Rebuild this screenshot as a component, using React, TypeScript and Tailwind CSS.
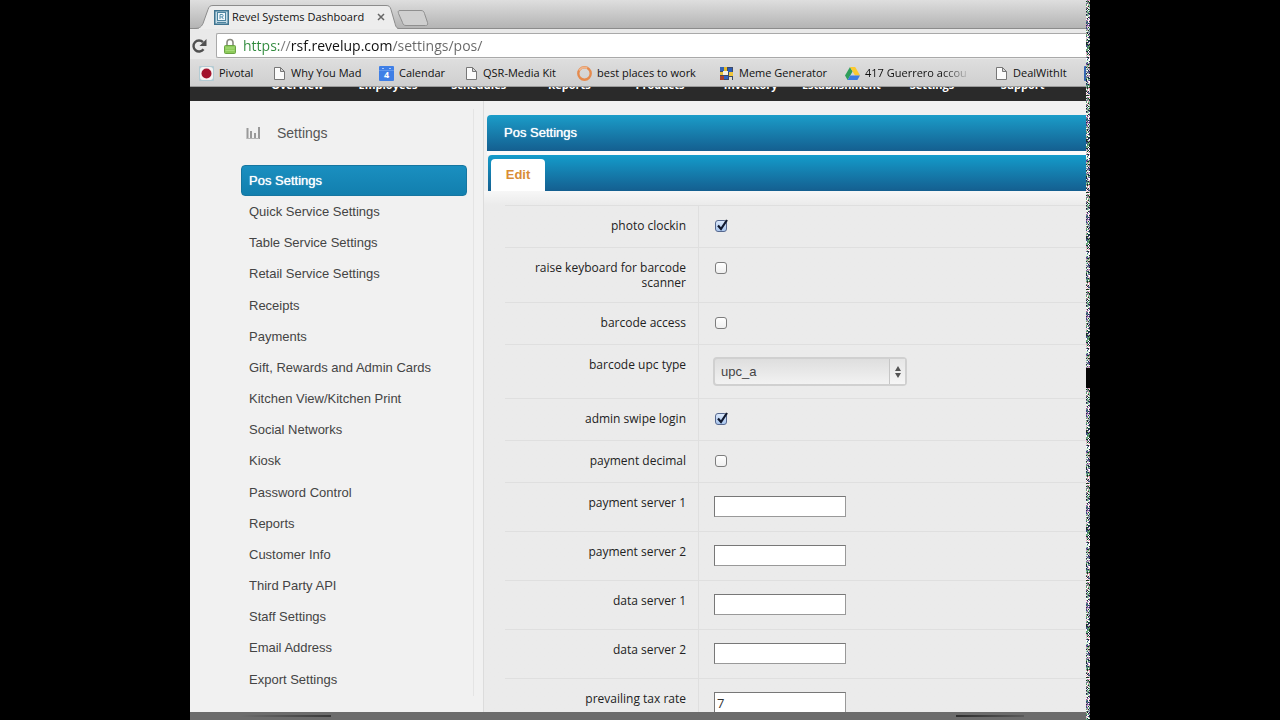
import React from 'react';
import clsx from 'clsx';

type IconName = 'pivotal' | 'page' | 'calendar' | 'ring' | 'meme' | 'drive' | 'blue';

interface Bookmark {
  label: string;
  icon: IconName;
  width: string;
  faded?: boolean;
}

interface Field {
  id: string;
  label: string;
  type: 'checkbox' | 'select' | 'text';
  checked?: boolean;
  value?: string;
}

const bookmarks: Bookmark[] = [
  { label: 'Pivotal', icon: 'pivotal', width: 'w-[75px]' },
  { label: 'Why You Mad', icon: 'page', width: 'w-[105px]' },
  { label: 'Calendar', icon: 'calendar', width: 'w-[87px]' },
  { label: 'QSR-Media Kit', icon: 'page', width: 'w-[111px]' },
  { label: 'best places to work', icon: 'ring', width: 'w-[142px]' },
  { label: 'Meme Generator', icon: 'meme', width: 'w-[126px]' },
  { label: '417 Guerrero accou', icon: 'drive', width: 'w-[151px]', faded: true },
  { label: 'DealWithIt', icon: 'page', width: 'w-[88px]' },
  { label: '', icon: 'blue', width: 'w-[15px]' },
];

const navItems = [
  'Overview',
  'Employees',
  'Schedules',
  'Reports',
  'Products',
  'Inventory',
  'Establishment',
  'Settings',
  'Support',
];

const menuItems = [
  'Pos Settings',
  'Quick Service Settings',
  'Table Service Settings',
  'Retail Service Settings',
  'Receipts',
  'Payments',
  'Gift, Rewards and Admin Cards',
  'Kitchen View/Kitchen Print',
  'Social Networks',
  'Kiosk',
  'Password Control',
  'Reports',
  'Customer Info',
  'Third Party API',
  'Staff Settings',
  'Email Address',
  'Export Settings',
];

const fields: Field[] = [
  { id: 'photo-clockin', label: 'photo clockin', type: 'checkbox', checked: true },
  { id: 'raise-keyboard', label: 'raise keyboard for barcode scanner', type: 'checkbox' },
  { id: 'barcode-access', label: 'barcode access', type: 'checkbox' },
  { id: 'barcode-upc-type', label: 'barcode upc type', type: 'select', value: 'upc_a' },
  { id: 'admin-swipe-login', label: 'admin swipe login', type: 'checkbox', checked: true },
  { id: 'payment-decimal', label: 'payment decimal', type: 'checkbox' },
  { id: 'payment-server-1', label: 'payment server 1', type: 'text' },
  { id: 'payment-server-2', label: 'payment server 2', type: 'text' },
  { id: 'data-server-1', label: 'data server 1', type: 'text' },
  { id: 'data-server-2', label: 'data server 2', type: 'text' },
  { id: 'prevailing-tax-rate', label: 'prevailing tax rate', type: 'text', value: '7' },
];

const PageIcon: React.FC = () => (
  <svg className="h-[15px] w-3 shrink-0" viewBox="0 0 12 15" aria-hidden="true">
    <path d="M.5 1.500h6l4 4v8H.5zM6.500 1.500v4h4" fill="#fbfbfb" stroke="#777" />
  </svg>
);

const BookmarkIcon: React.FC<{ name: IconName }> = ({ name }) => {
  if (name === 'page') {
    return <PageIcon />;
  }

  return (
    <svg className="h-[15px] w-[15px] shrink-0" viewBox="0 0 15 15" aria-hidden="true">
      {name === 'pivotal' && (
        <>
          <rect width="15" height="15" rx="1" fill="#b3cbd3" />
          <rect x="1" y="1" width="13" height="13" rx="3" fill="#f6f3f2" />
          <circle cx="7.5" cy="7.5" r="5" fill="#a3122c" />
        </>
      )}
      {name === 'calendar' && (
        <>
          <rect width="15" height="15" rx="1" fill="#3f7fe6" />
          <path d="M3 2.5h2M10 2.5h2" stroke="#a9c8fa" />
          <path d="M0 4.5h15" stroke="#5f97ee" />
          <text x="7.5" y="12" textAnchor="middle" fontSize="9" fontWeight="700" fill="#fff">
            4
          </text>
        </>
      )}
      {name === 'ring' && (
        <>
          <circle cx="7.5" cy="7.5" r="6.2" fill="none" stroke="#e58a4d" strokeWidth="2.4" />
          <path d="M2.2 4.5a6.2 6.2 0 0 1 8-2.5" fill="none" stroke="#efb58c" strokeWidth="2" />
        </>
      )}
      {name === 'meme' && (
        <>
          <rect x="1" y="1" width="13" height="13" fill="#3d4a68" />
          <path d="M1 1h4v4H1z" fill="#3564b4" />
          <path d="M5 1h3v4H5z" fill="#e7bb2b" />
          <path d="M9 2h4v4H9z" fill="#2a5bb8" />
          <path d="M1 6h3v3H1z" fill="#e9c23c" />
          <path d="M4 5h5v4H4z" fill="#f3f0e4" />
          <path d="M10 6h4v4h-4z" fill="#efc63a" />
          <path d="M1 10h4v4H1z" fill="#a8402f" />
          <path d="M5 10h4v3H5z" fill="#2e62c4" />
          <path d="M10 11h3v3h-3z" fill="#e3e0d0" />
        </>
      )}
      {name === 'drive' && (
        <>
          <path d="M5 1 0 9.6 2.6 14 7.6 5.4z" fill="#2f9e5b" />
          <path d="M5 1h5.2l5 8.6H10z" fill="#fbc92f" />
          <path d="M5.2 9.6H15L12.4 14H2.6z" fill="#3b7be0" />
        </>
      )}
      {name === 'blue' && <rect width="15" height="15" rx="1" fill="#3566b0" />}
    </svg>
  );
};

const BrowserTabs: React.FC = () => (
  <div className="flex h-[29px] items-end border-b border-[#8c8c8c] bg-linear-to-b from-[#dedede] to-[#b4b4b4] pl-1">
    <div className="relative -mb-px h-6 w-[206px] shrink-0">
      <svg className="absolute inset-0 h-full w-full" viewBox="0 0 206 24" aria-hidden="true">
        <path
          d="M0 23.500c5 0 7-1 9-5l5-14c1-3 2-4 5-4h173c3 0 4 1 5 4l4 14c1 4 2 5 5 5"
          fill="#ededed"
          stroke="#8c8c8c"
        />
        <path d="M5 23.500h198" stroke="#ededed" />
      </svg>
      <div className="relative flex h-full items-center pl-5">
        <svg className="h-[15px] w-[15px] shrink-0" viewBox="0 0 15 15" aria-hidden="true">
          <rect width="15" height="15" fill="#3f7490" />
          <rect x="1.500" y="1.500" width="12" height="12" fill="#c4dbe6" />
          <rect x="3.500" y="2.500" width="8" height="8" fill="#f1f8fb" stroke="#4d84a0" />
          <path d="M6 9V4.500h2a1.200 1.200 0 0 1 0 2.400H6M8 7l1.300 2" fill="none" stroke="#5b93b0" />
          <path d="M3 12.500h9" stroke="#4d84a0" />
        </svg>
        <span className="ml-[3px] w-[141px] whitespace-nowrap text-[11px] text-[#111]">
          Revel Systems Dashboard
        </span>
        <button type="button" aria-label="Close tab" className="flex h-4 w-4 items-center justify-center">
          <svg className="h-2 w-2" viewBox="0 0 8 8" aria-hidden="true">
            <path d="M1 1l6 6M7 1L1 7" stroke="#666" strokeWidth="1.500" />
          </svg>
        </button>
      </div>
    </div>
    <button type="button" aria-label="New tab" className="mb-[2px] -ml-[3px] h-4 w-8 shrink-0">
      <svg className="h-full w-full" viewBox="0 0 32 16" aria-hidden="true">
        <path
          d="M3 .5h21c2 0 3 1 3.500 3l3 9c.5 2 0 3-2 3H9c-2 0-3-1-3.500-3l-4-9C1 1.500 1 .5 3 .5z"
          fill="#cfcfcf"
          stroke="#8f8f8f"
        />
      </svg>
    </button>
  </div>
);

const AddressBar: React.FC = () => (
  <div className="flex h-[30px] items-end bg-[#e9e9e9] pb-px">
    <button type="button" aria-label="Reload" className="flex h-6 w-[18px] shrink-0 items-center justify-center">
      <svg className="h-4 w-4" viewBox="0 0 16 16" aria-hidden="true">
        <path d="M12.500 11.200A5.500 5.500 0 1 1 12 4.200" fill="none" stroke="#505050" strokeWidth="2.400" />
        <path d="M15.500 1v7H8.500z" fill="#505050" />
      </svg>
    </button>
    <div className="ml-2 flex h-[25px] min-w-0 flex-1 items-center rounded-l-[2px] border border-r-0 border-[#a9a9a9] bg-white pl-[7px]">
      <svg className="h-4 w-3 shrink-0" viewBox="0 0 12 16" aria-hidden="true">
        <path d="M3 8V4.500a3 3 0 0 1 6 0V8" fill="none" stroke="#8a8a80" strokeWidth="1.600" />
        <rect x=".5" y="7.500" width="11" height="8" rx="1" fill="#8ecb5c" stroke="#6ba344" />
        <path d="M1.500 10h9M1.500 12.500h9" stroke="#a8dc7c" />
      </svg>
      {/* scheme, host and path are tinted by the stops of one gradient */}
      <input
        type="text"
        aria-label="Address"
        defaultValue="https://rsf.revelup.com/settings/pos/"
        className="ml-[7px] h-full min-w-0 flex-1 bg-[linear-gradient(90deg,#2f8a3c_0_36px,#777_36px_48px,#111_48px_149px,#666_149px)] bg-clip-text text-[14px] text-transparent outline-none"
      />
    </div>
  </div>
);

const BookmarksBar: React.FC = () => (
  <nav
    aria-label="Bookmarks"
    className="flex h-[28px] items-center overflow-hidden border-b border-[#9a9a9a] bg-linear-to-b from-[#dedede] to-[#cfcfcf] pt-px pl-[9px]"
  >
    {bookmarks.map(({ label, icon, width, faded }) => (
      <a
        key={icon + label}
        href="#"
        aria-label={label || 'Bookmark'}
        className={clsx('flex shrink-0 items-center gap-[5px]', width)}
      >
        <BookmarkIcon name={icon} />
        <span
          className={clsx(
            'whitespace-nowrap text-[11px]',
            faded
              ? 'bg-linear-to-r from-[#111] from-75% to-[#bbb] bg-clip-text text-transparent'
              : 'text-[#111]',
          )}
        >
          {label}
        </span>
      </a>
    ))}
  </nav>
);

const SiteNav: React.FC = () => (
  <nav aria-label="Main" className="h-[14px] shrink-0 overflow-hidden bg-[#2a2a2a] pr-[18px] pl-[62px]">
    {/* page is scrolled, only the bottom of the links shows */}
    <ul className="-mt-[10px] grid grid-cols-9">
      {navItems.map((item) => (
        <li key={item} className="text-center">
          <a href="#" className="block text-[11px] leading-4 font-bold text-white">
            {item}
          </a>
        </li>
      ))}
    </ul>
  </nav>
);

const Sidebar: React.FC = () => (
  <aside className="w-[294px] shrink-0 border-r border-[#dcdcdc] pt-2 font-['Liberation_Sans',Arial,sans-serif]">
    <div className="mr-[9px] h-[587px] border-r border-[#e4e4e4] pr-[6px] pl-[51px]">
      <h2 className="flex h-[48px] items-center gap-[17px] pl-[5px] text-[14px] text-[#555]">
        <svg className="h-3 w-[14px]" viewBox="0 0 14 12" aria-hidden="true">
          <path d="M1.500 1v11M5 4v8M9 6v6M13 0v12" stroke="#999" strokeWidth="2" />
          <path d="M1 11.500h12" stroke="#b5b5b5" />
        </svg>
        Settings
      </h2>
      <ul className="mt-2 grid h-[530px] auto-rows-fr">
        {menuItems.map((item, index) => (
          <li key={item}>
            <a
              href="#"
              className={clsx(
                'flex h-full items-center rounded-[4px] border pl-[7px] text-[13px]',
                index === 0
                  ? 'border-[#1676a0] bg-linear-to-b from-[#1a8fc0] to-[#127fae] text-white text-shadow-[0_0_1px_#fff]'
                  : 'border-transparent text-[#444]',
              )}
            >
              {item}
            </a>
          </li>
        ))}
      </ul>
    </div>
  </aside>
);

const FieldControl: React.FC<{ field: Field }> = ({ field }) => {
  if (field.type === 'checkbox') {
    return (
      <span className="relative ml-px flex h-[17px] w-4 items-start pt-[2px]">
        <input
          id={field.id}
          type="checkbox"
          defaultChecked={field.checked}
          className="peer ml-px h-3 w-3 appearance-none rounded-[3px] border border-[#7d7d7d] bg-linear-to-b from-white to-[#efefef] checked:border-[#56688f] checked:from-[#dbe8fa] checked:to-[#a9c6ee]"
        />
        <svg
          className="pointer-events-none absolute inset-0 hidden h-4 w-4 peer-checked:block"
          viewBox="0 0 16 16"
          aria-hidden="true"
        >
          <path d="M4 7.500l3 3.500 6-9" fill="none" stroke="#10182e" strokeWidth="2.200" />
        </svg>
      </span>
    );
  }

  if (field.type === 'select') {
    return (
      <span className="relative block h-[29px] w-[194px]">
        <select
          id={field.id}
          defaultValue={field.value}
          className="h-full w-full appearance-none rounded-[4px] border-2 border-[#d0d0d0] bg-linear-to-b from-[#dedede] to-[#f2f2f2] pl-[6px] font-['Liberation_Sans',Arial,sans-serif] text-[13px] text-[#444]"
        >
          <option value="upc_a">upc_a</option>
        </select>
        <span className="pointer-events-none absolute inset-y-[2px] right-[2px] flex w-4 items-center justify-center border-l border-[#c6c6c6] bg-linear-to-b from-[#e6e6e6] to-[#f6f6f6]">
          <svg className="h-3 w-[6px]" viewBox="0 0 6 12" aria-hidden="true">
            <path d="M3 0l3 5H0zM3 12l3-5H0z" fill="#555" />
          </svg>
        </span>
      </span>
    );
  }

  return (
    <span className="flex h-6 items-start pt-px">
      <input
        id={field.id}
        type="text"
        defaultValue={field.value}
        className="ml-px h-[21px] w-[132px] border border-[#999] border-t-[#777] border-l-[#777] bg-white px-[2px] text-[13px] text-[#333] outline-none"
      />
    </span>
  );
};

const SettingsPanel: React.FC = () => (
  <main className="min-w-0 flex-1 bg-[#ebebeb]">
    <div className="bg-[#f1f1f1] pt-[14px] pl-[3px] font-['Liberation_Sans',Arial,sans-serif]">
      <h1 className="flex h-9 items-center rounded-tl-[4px] bg-linear-to-b from-[#1b9dc9] to-[#145f90] pl-[17px] text-[13px] text-white text-shadow-[0_0_1px_#fff]">
        Pos Settings
      </h1>
      <div className="h-1 bg-[#fafafa]" />
      <div
        role="tablist"
        className="ml-px flex h-9 items-end rounded-tl-[4px] bg-linear-to-b from-[#139ccb] to-[#145f90] pl-[3px]"
      >
        <button
          type="button"
          role="tab"
          aria-selected="true"
          className="h-8 w-[54px] rounded-t-[4px] bg-white text-[13px] font-bold text-[#d98c35]"
        >
          Edit
        </button>
      </div>
    </div>
    <form className="bg-linear-to-b from-[#f7f7f7] to-[#ebebeb] to-[14px] pt-[14px] pl-[21px]">
      <div className="border-t border-[#dfdfdf]">
        {fields.map((field) => (
          <div key={field.id} className="flex border-b border-[#dfdfdf]">
            <label
              htmlFor={field.id}
              className="w-[194px] shrink-0 border-r border-[#dfdfdf] py-3 pr-3 pl-5 text-right text-[12px] leading-[15px] text-[#222]"
            >
              {field.label}
            </label>
            <div className="py-3 pl-[14px]">
              <FieldControl field={field} />
            </div>
          </div>
        ))}
      </div>
    </form>
  </main>
);

const noiseColors = ['#1b2f1c', '#d8f0dc', '#5f9f70', '#8a5fa6', '#e0a0b8', '#3a4a80', '#90c9a5', '#ffffff', '#1c2a42'];

// small LCG, the same grain comes out on every render
const noiseCells = Array.from({ length: 388 }).reduce<number[]>((cells) => {
  const last = cells.length ? cells[cells.length - 1] : 17;
  return [...cells, (last * 1103 + 12345) % 65537];
}, []);

// noise along the right edge of the recording
const NoiseStrip: React.FC = () => (
  <svg className="h-full w-1 shrink-0" aria-hidden="true">
    <defs>
      <pattern id="noise" width="4" height="97" patternUnits="userSpaceOnUse">
        {noiseCells.map((cell, i) => (
          <rect
            key={i}
            x={i % 4}
            y={Math.floor(i / 4)}
            width="1"
            height="1"
            fill={noiseColors[cell % noiseColors.length]}
          />
        ))}
      </pattern>
    </defs>
    <rect width="4" height="100%" fill="url(#noise)" />
    <rect y="368" width="4" height="20" fill="#050505" />
  </svg>
);

const App: React.FC = () => (
  <div className="flex h-screen bg-black px-[190px] font-['Open_Sans','Noto_Sans',sans-serif]">
    <div className="flex min-w-0 flex-1 flex-col overflow-hidden">
      <header className="shrink-0">
        <BrowserTabs />
        <AddressBar />
        <BookmarksBar />
      </header>
      <SiteNav />
      <div className="flex min-h-0 flex-1 overflow-hidden bg-[#f1f1f1]">
        <Sidebar />
        <SettingsPanel />
      </div>
      <footer className="flex h-2 shrink-0 items-center justify-between bg-[#6c6c6c] pr-[62px] pl-[50px]">
        <span className="h-[2px] w-[91px] bg-linear-to-r from-[#6c6c6c] to-[#3a3a3a]" />
        <span className="h-[2px] w-[68px] bg-linear-to-r from-[#2e2e2e] to-[#5a5a5a]" />
      </footer>
    </div>
    <NoiseStrip />
  </div>
);

export default App;
